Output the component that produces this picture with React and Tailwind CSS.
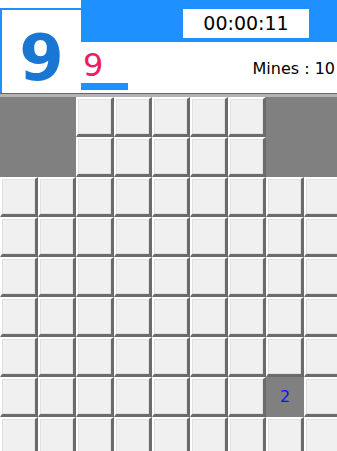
import React from 'react';

const ROWS = 9;
const COLS = 9;

// revealed cells: key "r-c" -> value (0 = empty)
const revealed = {
  '0-0': 0, '0-1': 0, '1-0': 0, '1-1': 0,
  '0-7': 0, '0-8': 0, '1-7': 0, '1-8': 0,
  '7-7': 2,
};

function Cell({ r, c }) {
  const key = `${r}-${c}`;
  if (key in revealed) {
    const v = revealed[key];
    return (
      <div className="w-[38px] h-[40px] shrink-0 bg-[#808080] flex items-center justify-center text-[16px] text-[#1010ff]">
        {v > 0 ? v : ''}
      </div>
    );
  }
  return (
    <div className="w-[38px] h-[40px] shrink-0 bg-[#f0f0f0] border-l-2 border-t-2 border-white border-r-[3px] border-b-[3px] border-r-[#6b6b6b] border-b-[#6b6b6b] shadow-[inset_1px_1px_0_#e2e2e2,inset_-1px_-1px_0_#e2e2e2]" />
  );
}

export default function App() {
  return (
    <div className="w-full h-screen overflow-hidden bg-white" style={{ fontFamily: '"DejaVu Sans", Verdana, sans-serif' }}>
      {/* Header */}
      <div className="flex h-[93px]">
        <div className="w-[81px] shrink-0 mt-[8px] border-t-2 border-l-2 border-[#1e90ff] flex justify-center pt-[16px]">
          <span className="text-[64px] leading-none font-bold text-[#1976d2]">9</span>
        </div>
        <div className="flex-1 flex flex-col">
          <div className="h-[42px] bg-[#1e90ff] flex justify-end items-start pt-[9px] pr-[28px]">
            <div className="w-[126px] h-[29px] bg-white flex items-center justify-center text-[19px] text-black">
              00:00:11
            </div>
          </div>
          <div className="flex justify-between">
            <div className="flex flex-col pt-[7px]">
              <span className="text-[32px] leading-none text-[#e91e63] pl-[2px]">9</span>
              <div className="mt-[2px] w-[47px] h-[7px] bg-[#1e90ff]" />
            </div>
            <div className="pt-[19px] pr-[2px] text-[16px] leading-none text-black">Mines : 10</div>
          </div>
        </div>
      </div>
      <div className="h-[1px] bg-[#666666]" />
      <div className="h-[3px] bg-[#b3b3b3]" />

      {/* Board */}
      <div className="flex flex-col w-max bg-[#808080]">
        {Array.from({ length: ROWS }).map((_, r) => (
          <div key={r} className="flex">
            {Array.from({ length: COLS }).map((_, c) => (
              <Cell key={c} r={r} c={c} />
            ))}
          </div>
        ))}
      </div>
    </div>
  );
}
